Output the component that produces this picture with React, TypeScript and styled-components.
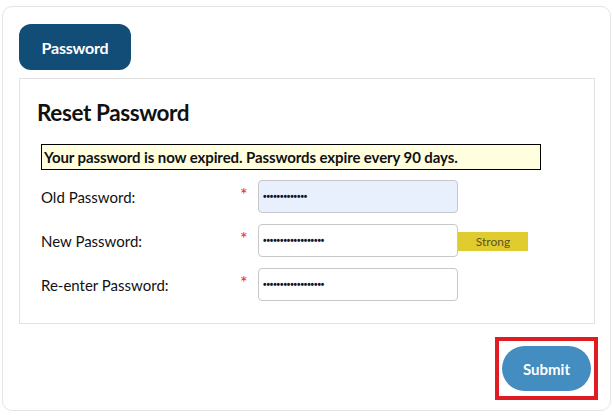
import React from 'react';
import styled, { createGlobalStyle } from 'styled-components';

const GlobalStyle = createGlobalStyle`
  html, body {
    margin: 0;
    padding: 0;
    background: #ffffff;
  }
  body {
    font-family: Lato, "Open Sans", "Liberation Sans", sans-serif;
    color: #111;
  }
`;

const Card = styled.div`
  box-sizing: border-box;
  margin: 6px 0 0 2px;
  width: 609px;
  height: 405px;
  border: 1px solid #e4e4e4;
  border-radius: 10px;
  padding: 17px 16px 0 16px;
  display: flex;
  flex-direction: column;
`;

const Tab = styled.div`
  box-sizing: border-box;
  width: 112px;
  height: 46px;
  background: #124d77;
  border-radius: 12px;
  color: #fff;
  font-size: 16px;
  font-weight: 700;
  display: flex;
  align-items: center;
  justify-content: center;
  letter-spacing: -0.2px;
`;

const Panel = styled.section`
  box-sizing: border-box;
  margin-top: 8px;
  width: 576px;
  height: 246px;
  border: 1px solid #e2e2e2;
  padding: 20px 0 0 17px;
`;

const Heading = styled.h2`
  margin: 0 0 17px 0;
  font-size: 22.5px;
  font-weight: 700;
  letter-spacing: -0.4px;
  line-height: 28px;
`;

const Notice = styled.div`
  box-sizing: border-box;
  margin-left: 4px;
  width: 500px;
  height: 26px;
  border: 1px solid #000;
  background: #ffffe0;
  font-size: 15px;
  font-weight: 700;
  letter-spacing: -0.1px;
  display: flex;
  align-items: center;
  padding-left: 2px;
`;

const Rows = styled.div`
  margin: 10px 0 0 4px;
  display: flex;
  flex-direction: column;
  gap: 11px;
`;

const Row = styled.div`
  display: flex;
  align-items: center;
  height: 33px;
`;

const Label = styled.label`
  width: 199px;
  font-size: 15px;
`;

const Required = styled.span`
  width: 18px;
  color: #e8262b;
  font-size: 18px;
  margin-top: -6px;
`;

const Input = styled.input<{ $filled?: boolean }>`
  box-sizing: border-box;
  width: 200px;
  height: 33px;
  border: 1px solid #c8c8c8;
  border-radius: 4px;
  background: ${p => (p.$filled ? '#e8f0fe' : '#ffffff')};
  padding: 0 4px;
  font-family: "Liberation Sans", sans-serif;
  font-size: 10px;
  font-weight: 700;
  letter-spacing: -0.1px;
  color: #14142a;
  outline: none;
`;

const Strength = styled.div`
  width: 70px;
  height: 19px;
  background: #e1cc2f;
  color: #5c5421;
  font-size: 12px;
  display: flex;
  align-items: center;
  justify-content: center;
  margin-top: 1px;
`;

const Footer = styled.div`
  display: flex;
  justify-content: flex-end;
  padding: 13px 0 0 0;
  margin-right: -4px;
`;

const Highlight = styled.div`
  box-sizing: border-box;
  width: 103px;
  height: 63px;
  border: 4px solid #e01b22;
  display: flex;
  align-items: center;
  justify-content: center;
`;

const SubmitButton = styled.button`
  width: 89px;
  height: 45px;
  border: none;
  border-radius: 23px;
  background: #438dc0;
  color: #fff;
  font-family: inherit;
  font-size: 15px;
  font-weight: 700;
  cursor: pointer;
`;

const fields = [
  { label: 'Old Password:', value: '•••••••••••••', filled: true },
  { label: 'New Password:', value: '••••••••••••••••••', strength: 'Strong' },
  { label: 'Re-enter Password:', value: '••••••••••••••••••' },
];

export default function App() {
  return (
    <>
      <GlobalStyle />
      <Card>
        <Tab>Password</Tab>
        <Panel>
          <Heading>Reset Password</Heading>
          <Notice>Your password is now expired. Passwords expire every 90 days.</Notice>
          <Rows>
            {fields.map(f => (
              <Row key={f.label}>
                <Label>{f.label}</Label>
                <Required>*</Required>
                <Input type="text" readOnly value={f.value} $filled={f.filled} />
                {f.strength && <Strength>{f.strength}</Strength>}
              </Row>
            ))}
          </Rows>
        </Panel>
        <Footer>
          <Highlight>
            <SubmitButton type="button">Submit</SubmitButton>
          </Highlight>
        </Footer>
      </Card>
    </>
  );
}
